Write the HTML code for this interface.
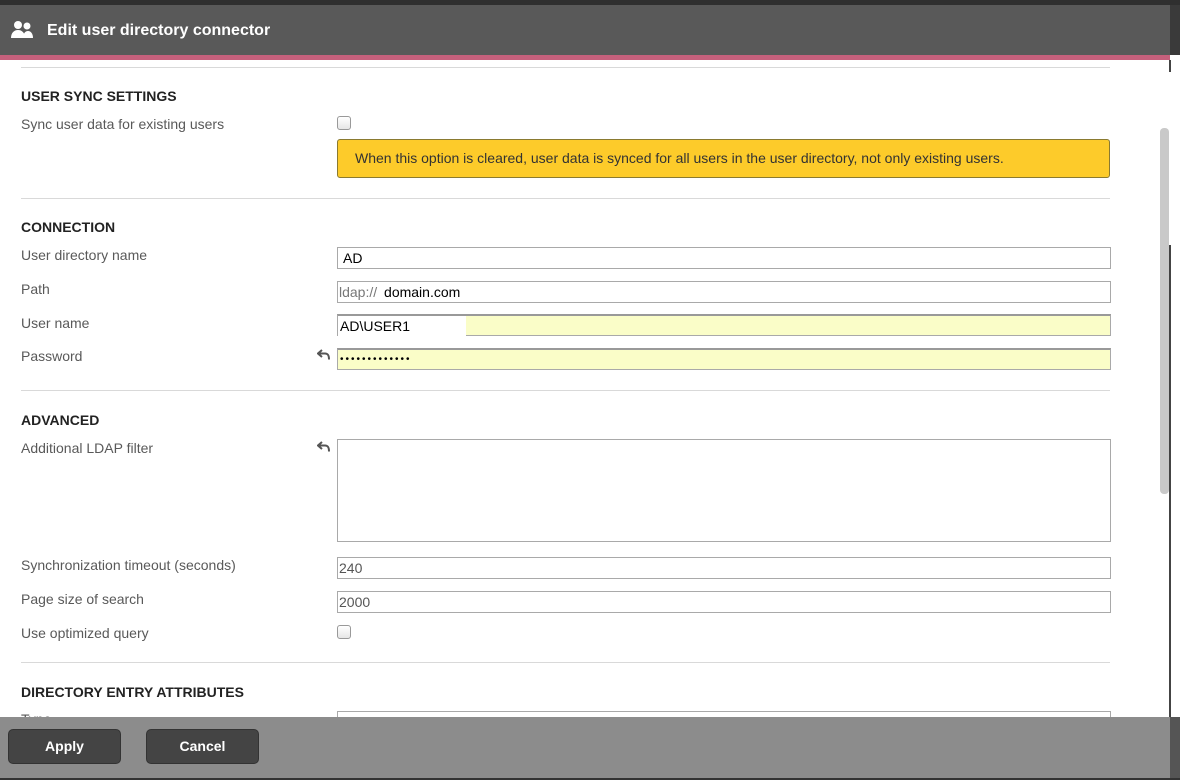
<!DOCTYPE html>
<html><head><style>
body{margin:0;width:1180px;height:784px;overflow:hidden;background:#fff;font-family:"Liberation Sans",sans-serif;position:relative}
.a{position:absolute}
.lbl{position:absolute;left:21px;font-size:14px;color:#595959}
.h{position:absolute;left:21px;font-size:14px;font-weight:bold;color:#222}
.inp{position:absolute;left:337px;width:772px;height:20px;border:1px solid #a9a9a9;background:#fff;font-size:14px;line-height:20px;box-sizing:content-box}
.hr{position:absolute;left:21px;width:1089px;height:1px;background:#d9d9d9}
.cb{position:absolute;left:337px;width:12px;height:12px;border:1px solid #999;border-radius:3px;background:linear-gradient(#fff,#e6e6e6)}
.btn{position:absolute;top:729px;height:33px;background:#444;border-radius:5px;color:#fff;font-weight:bold;font-size:14px;line-height:33px;text-align:center;border:1px solid #333}
</style></head><body>
<div class="a" style="left:0;top:0;width:1180px;height:5px;background:#2f2f2f"></div>
<div class="a" style="left:0;top:5px;width:1170px;height:50px;background:#595959"></div>
<div class="a" style="left:1170px;top:5px;width:10px;height:50px;background:#3a3a3a"></div>
<div class="a" style="left:0;top:55px;width:1170px;height:5px;background:#c6607c"></div>
<svg class="a" style="left:11px;top:20px" width="26" height="20" viewBox="0 0 26 20"><circle cx="7" cy="5" r="4" fill="#fff"/><circle cx="16" cy="6" r="3.5" fill="#fff"/><path d="M0 18c0-5 3-8 7-8s7 3 7 8z" fill="#fff"/><path d="M12 18c0-4 2-7 5-7s5 3 5 7z" fill="#fff"/></svg>
<div class="a" style="left:47px;top:22px;color:#fff;font-weight:bold;font-size:16px">Edit user directory connector</div>
<div class="a" style="left:1169px;top:60px;width:2px;height:12px;background:#444"></div>
<div class="a" style="left:1169px;top:245px;width:2px;height:472px;background:#444"></div>
<div class="a" style="left:1160px;top:128px;width:9px;height:366px;background:#c9c9c9;border-radius:4px"></div>
<div class="hr" style="top:67px"></div>
<div class="h" style="top:88px">USER SYNC SETTINGS</div>
<div class="lbl" style="top:116px">Sync user data for existing users</div>
<div class="cb" style="top:116px"></div>
<div class="a" style="left:337px;top:139px;background:#fdcb2a;border:1px solid #8a7a30;border-radius:3px;font-size:14px;color:#333;line-height:37px;padding-left:17px;box-sizing:border-box;width:773px;height:39px">When this option is cleared, user data is synced for all users in the user directory, not only existing users.</div>
<div class="hr" style="top:198px"></div>
<div class="h" style="top:219px">CONNECTION</div>
<div class="lbl" style="top:247px">User directory name</div>
<div class="inp" style="top:247px;color:#000"><span style="margin-left:5px">AD</span></div>
<div class="lbl" style="top:281px">Path</div>
<div class="inp" style="top:281px"><span style="color:#777;margin-left:1px">ldap://</span> <span style="color:#000;margin-left:3px">domain.com</span></div>
<div class="lbl" style="top:315px">User name</div>
<div class="inp" style="top:314px;background:#fafdc8;border-top:2px solid #999;height:19px"><span style="background:#fff;color:#000;display:inline-block;width:126px;padding-left:2px">AD\USER1</span></div>
<div class="lbl" style="top:348px">Password</div>
<svg class="a" style="left:317px;top:349px" width="14" height="12" viewBox="0 0 14 12"><path d="M5 1L1 4.5 5 8" fill="none" stroke="#555" stroke-width="2"/><path d="M2 4.5h6c3 0 4 2 4 6" fill="none" stroke="#555" stroke-width="2"/></svg>
<div class="inp" style="top:348px;background:#fafdc8;border-top:2px solid #999;height:19px;font-size:10px;letter-spacing:2px;line-height:19px"><span style="margin-left:2px">•••••••••••••</span></div>
<div class="hr" style="top:390px"></div>
<div class="h" style="top:412px">ADVANCED</div>
<div class="lbl" style="top:440px">Additional LDAP filter</div>
<svg class="a" style="left:317px;top:441px" width="14" height="12" viewBox="0 0 14 12"><path d="M5 1L1 4.5 5 8" fill="none" stroke="#555" stroke-width="2"/><path d="M2 4.5h6c3 0 4 2 4 6" fill="none" stroke="#555" stroke-width="2"/></svg>
<div class="inp" style="top:439px;height:101px"></div>
<div class="lbl" style="top:557px">Synchronization timeout (seconds)</div>
<div class="inp" style="top:557px;color:#555"><span style="margin-left:1px">240</span></div>
<div class="lbl" style="top:591px">Page size of search</div>
<div class="inp" style="top:591px;color:#555"><span style="margin-left:1px">2000</span></div>
<div class="lbl" style="top:625px">Use optimized query</div>
<div class="cb" style="top:625px"></div>
<div class="hr" style="top:662px"></div>
<div class="h" style="top:684px">DIRECTORY ENTRY ATTRIBUTES</div>
<div class="lbl" style="top:711px">Type</div>
<div class="inp" style="top:711px"></div>
<div class="a" style="left:0;top:717px;width:1170px;height:61px;background:#8c8c8c"></div>
<div class="a" style="left:1170px;top:717px;width:10px;height:61px;background:#555"></div>
<div class="a" style="left:0;top:778px;width:1180px;height:2px;background:#333"></div>
<div class="btn" style="left:8px;width:111px">Apply</div>
<div class="btn" style="left:146px;width:111px">Cancel</div>
</body></html>
